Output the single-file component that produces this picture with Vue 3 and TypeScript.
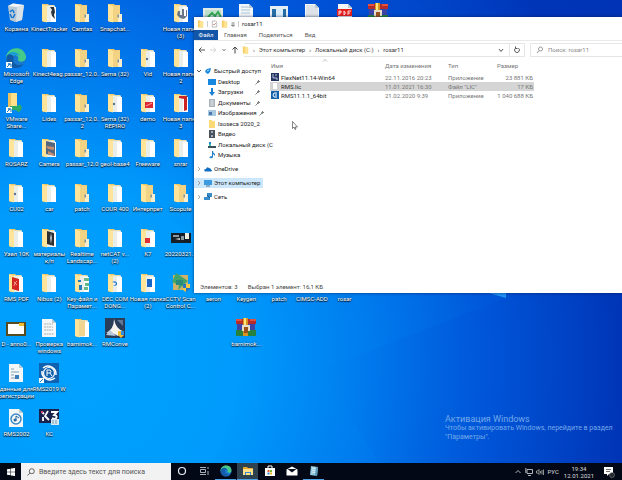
<script setup lang="ts">
import { ref } from 'vue'

interface Shortcut {
  label: string
  icon: string
  col: number
  row: number
}

const grid: [string, string][][] = [
  [
    ['Корзина', 'bin'], ['KinectTracker', 'f-dark'], ['Camtas', 'f-zip'], ['Snapchat...', 'f-zip'], ['', ''],
    ['Новая папка\n(3)', 'f-hand'], ['', 'picture'], ['', 'doc'], ['', 'window'], ['', 'docgray'],
    ['', 'pdf'], ['', 'rar'],
  ],
  [
    ['Microsoft\nEdge', 'edge'], ['Kinect4eag..', 'f-white'], ['passar_12.0..', 'f-zip'], ['Serna (32)', 'f-zip'],
    ['Vid', 'f-dot'], ['Новая папка\n2', 'f-white'],
  ],
  [
    ['VMware\nShare...', 'share'], ['Lides', 'f-white'], ['passar_12.0..\n2', 'f-zip'], ['Serna (32)\nREPIRO', 'f-dot'],
    ['demo', 'f-redbox'], ['Новая папка\n3', 'f-redside'],
  ],
  [
    ['ROSARZ', 'f-white'], ['Camera', 'f-photo'], ['passar_12.0', 'f-zip'], ['geol-base4', 'f-white'],
    ['Freeware', 'f-white'], ['snrar', 'f-white'],
  ],
  [
    ['CU02', 'f-dot'], ['car', 'f-white'], ['patch', 'f-zip'], ['COUR 400', 'f-white'], ['Интерпрет', 'f-zip'],
    ['Scopute', 'f-zip'],
  ],
  [
    ['Узел 10К', 'f-white'], ['материалы\nк/п', 'f-dark2'], ['Realtime\nLandscap...', 'f-zip'],
    ['netCAT v...\n(2)', 'f-white'], ['K7', 'f-redsmall'], ['20220321...', 'video'],
  ],
  [
    ['RMS PDF', 'f-red'], ['Nibus (2)', 'f-white'], ['Key-файл и\nПарамет...', 'f-green'], ['DEC COM\nDONG...', 'f-blue'],
    ['Новая папка\n(2)', 'f-bluebox'], ['CCTV Scan\nControl C...', 'control'], ['aeron', 'f-white'],
    ['Keygen', 'f-zip'], ['patch', 'f-zip'], ['CIMSC-ADD', 'f-white'], ['rosar', 'f-white'],
  ],
  [
    ['D - anno0...', 'screen'], ['Проверка\nwindows', 'textdoc'], ['barnimok...', 'f-half'], ['RMConve', 'tool'],
    ['', ''], ['', ''], ['', ''], ['barnimok...', 'rar'],
  ],
  [['данные для\nрегистрации', 'sheet'], ['RMS2019 W', 'rapp']],
  [['RMS2002', 'disc'], ['KC', 'kc']],
]

const shortcuts: Shortcut[] = grid.flatMap((cells, r) =>
  cells
    .map(([label, icon], c) => ({ label, icon, col: c + 1, row: r + 1 }))
    .filter((s) => s.icon !== ''),
)

const places = [
  { name: 'Desktop', icon: 'desktop', pin: true },
  { name: 'Загрузки', icon: 'down', pin: true },
  { name: 'Документы', icon: 'docs', pin: true },
  { name: 'Изображения', icon: 'pics', pin: true },
  { name: 'Isoseca 2020_2', icon: 'folder', pin: false },
  { name: 'Видео', icon: 'film', pin: false },
  { name: 'Локальный диск (C', icon: 'drive', pin: false },
  { name: 'Музыка', icon: 'music', pin: false },
]

const files = [
  { name: 'FlexNet11.14-Win64', icon: 'flex', date: '22.11.2016 20:23', type: 'Приложение', size: '23 881 КБ' },
  { name: 'RMS.lic', icon: 'blank', date: '11.01.2021 16:30', type: 'Файл "LIC"', size: '17 КБ' },
  { name: 'RMS11.1.1_64bit', icon: 'rms', date: '21.02.2020 9:39', type: 'Приложение', size: '1 040 688 КБ' },
]

const tabs = ['Главная', 'Поделиться', 'Вид']
const selected = ref('RMS.lic')
const fileQuery = ref('')
const taskQuery = ref('')
</script>

<template>
  <div class="screen">
    <main class="desktop">
      <svg class="rays" viewBox="0 0 622 463" preserveAspectRatio="none" aria-hidden="true">
        <defs>
          <linearGradient id="ray" x1="0" x2="1" y1="0" y2="0">
            <stop offset="0" stop-color="#0047cf" stop-opacity="0" />
            <stop offset=".6" stop-color="#0047cf" stop-opacity=".2" />
            <stop offset="1" stop-color="#0038b8" stop-opacity=".1" />
          </linearGradient>
        </defs>
        <path d="M622 262 506 298 320 370 380 463H622Z" fill="url(#ray)" />
        <path d="M478 290h28v8Z" fill="#2da8ff" opacity=".75" />
      </svg>

      <div class="shortcuts">
        <button
          v-for="s in shortcuts"
          :key="s.row + '-' + s.col"
          class="shortcut"
          type="button"
          :style="{ gridColumn: s.col, gridRow: s.row }"
        >
          <svg class="big" viewBox="0 0 20 20" aria-hidden="true">
            <g v-if="s.icon.startsWith('f-')">
              <path d="M3 1h6l1 1h5v17H5l-2-1Z" fill="#eec765" />
              <path v-if="s.icon !== 'f-zip'" d="M7 2.500h9v16.500H7Z" fill="#e9eeea" />
              <path v-if="s.icon !== 'f-zip'" d="M12 4h5v15h-5Z" fill="#fff" />
              <path v-else d="M8 2.500h7v9l2 1v6.500H8Z" fill="#f2d383" />
              <path v-if="s.icon === 'f-zip'" d="M13 11h4v8h-4Z" fill="#f8edcc" />
              <path d="M3 1 8 3V19.500L3 18Z" fill="#ffe49a" />
              <path v-if="s.icon === 'f-zip'" d="M12.500 11.500h1.500v3h-1.500Z" fill="#7891a0" />
              <circle v-if="s.icon === 'f-dot'" cx="9" cy="11" r="1.200" fill="#59739a" />
              <path v-if="s.icon === 'f-dark'" d="M11 4h4l1 5-1 3 1 4-3-3-1-4 1-2Z" fill="#28343c" />
              <path v-if="s.icon === 'f-hand'" d="M7 8h2v4h2V6h2v7h2V7h1v6l-3 3-4-1-3-3Z" fill="#6a7786" />
              <path v-if="s.icon === 'f-dark2'" d="M8 3 15 5v13l-7-2Z" fill="#2d3032" />
              <path v-if="s.icon === 'f-dark2'" d="m12 5 1 5-1 6-1-6Z" fill="#b7c4cb" />
              <path v-if="s.icon === 'f-photo'" d="M7 3 16 5v13l-9-2Z" fill="#52677d" />
              <path v-if="s.icon === 'f-photo'" d="m7 8 8 1v3l-6-1ZM9 13l6 3v2l-6-2Z" fill="#c78d72" />
              <path v-if="s.icon === 'f-redbox'" d="M7 9h8v6H7Z" fill="#dc2932" />
              <path v-if="s.icon === 'f-redbox'" d="m8 13 6-3" stroke="#f9a7a7" />
              <path v-if="s.icon === 'f-redside'" d="M8 3h8v14l-3 1V6L8 5Z" fill="#cb2425" />
              <path v-if="s.icon === 'f-redsmall'" d="M7 10h5v5H7Z" fill="#df3035" />
              <path v-if="s.icon === 'f-red'" d="m6 4 7 2v12l-7-2Z" fill="#d5271f" />
              <path v-if="s.icon === 'f-red'" d="M8 13q1-4 3-5M8 9l3 3" stroke="#fbd1c9" stroke-width=".7" fill="none" />
              <path v-if="s.icon === 'f-green'" d="M12 5h5v3h-5ZM13 10h4v3h-4ZM12 14h4v3h-4Z" fill="#63b98b" />
              <path v-if="s.icon === 'f-green'" d="M6 7h3v2H6Zm1 5h3v5H7Z" fill="#257bbb" />
              <path v-if="s.icon === 'f-blue'" d="M7 9q4-2 5 1t-4 3q3-1 3-3Z" fill="#2576c9" />
              <path v-if="s.icon === 'f-bluebox'" d="M9 6h5v8H9Z" fill="#1766c5" />
              <path v-if="s.icon === 'f-half'" d="M7 3h6v15H7Z" fill="#efd590" />
            </g>
            <g v-else-if="s.icon === 'bin'">
              <path d="M2 3 7 .5 18 2l-2 15-7 2-5-2Z" fill="#b9c8d5" />
              <path d="M2 3 7 .5 18 2l-7 2Z" fill="#f3f5f7" />
              <path d="M11 4 18 2l-2 15-6 2Z" fill="#dae1e7" />
              <path d="M4 9q3-4 4 1M9 11l-2 4M6 15l-2-4" fill="none" stroke="#1678d1" stroke-width="1.600" />
            </g>
            <g v-else-if="s.icon === 'edge'">
              <circle cx="10" cy="10" r="10" fill="#1679cf" />
              <path d="M0 9C1-1 17-4 20 8c1 6-7 7-8 4 2-5-5-7-12-3Z" fill="#46ca89" />
              <path d="M0 10C3 2 11 3 14 8c-6-3-9 2-7 6s8 5 11 2c-4 5-15 6-18-6Z" fill="#1a9dd3" />
              <path d="M8 9c-3 6 3 10 10 7-8 9-20 2-17-8 1-2 4-3 7 1Z" fill="#135aa5" />
              <path d="M0 14h6v6H0Z" fill="#fff" /><path d="m1 19 3-3H2h3v3" stroke="#1479c7" fill="none" />
            </g>
            <g v-else-if="s.icon === 'share'">
              <path d="M2 0h8v14H2Z" fill="#eac15e" /><path d="M5 0h6v14H5Z" fill="#ffe18b" />
              <path d="M4 15h8l3-2M10 14l4 4" stroke="#2dac68" stroke-width="4" fill="none" />
              <path d="M0 14h6v6H0Z" fill="#fff" /><path d="m1 19 3-3H2h3v3" stroke="#1479c7" fill="none" />
            </g>
            <g v-else-if="s.icon === 'rar'">
              <path d="M0 1h20v5H0Z" fill="#b52a2b" /><path d="M1 6h18v6H1Z" fill="#3c44a5" />
              <path d="M0 12h20v6H0Z" fill="#27813f" /><path d="M0 1h6v2H0Zm14 0h6v2h-6Z" fill="#e6513b" />
              <path d="M7 0h5v18H7Z" fill="#d99321" /><path d="M8 0h2v7H8Z" fill="#ffe57a" />
              <path d="M6 7h8v6H6Z" fill="#e6ddca" /><path d="M8 9h4v6H8Z" fill="#9a521d" />
            </g>
            <g v-else-if="s.icon === 'picture'">
              <path d="M0 5h20v13H0Z" fill="#dfe9e6" /><path d="M2 7h16v9H2Z" fill="#bedfcb" />
              <path d="m5 14 4-4 3 3 3-4 3 5" fill="none" stroke="#36a854" stroke-width="2" />
            </g>
            <g v-else-if="s.icon === 'window'">
              <path d="M1 3h18v15H1Z" fill="#e5eef3" /><path d="M3 6h14v12H3Z" fill="#266fa6" />
              <path d="M7 6h7v8H7Z" fill="#d9eefa" />
            </g>
            <g v-else-if="s.icon === 'video'">
              <path d="M0 5h20v10H0Z" fill="#161f27" /><path d="M2 7h6v2H2Zm8 1h3v4h-3Z" fill="#8c9a9f" />
              <path d="M14 5h4v6h-4Z" fill="#f0ede1" /><path d="m4 11 5-1v2Z" fill="#d9d8cd" />
            </g>
            <g v-else-if="s.icon === 'control'">
              <path d="M2 2h15v15H2Z" fill="#ceb269" /><path d="m5 0 12 8-10 9 1-5-7-3Z" fill="#42a46b" />
              <path d="M5 7h7v5H5Z" fill="#2a8b7c" /><path d="M12 11h7v5l-4 3-3-3Z" fill="#2475c5" />
              <path d="M15 11h4v4h-4Zm-3 4h3v4l-3-2Z" fill="#f4c842" />
            </g>
            <g v-else-if="s.icon === 'screen'">
              <path d="M0 4h20v14H0Z" fill="#574b20" /><path d="M2 6h16v10H2Z" fill="#fff" />
              <path d="M13 5h5v3h-5Z" fill="#f3bd2f" />
            </g>
            <g v-else-if="s.icon === 'tool'">
              <path d="M0 0h20v20H0Z" fill="#293d58" /><path d="M9 1q2 10 9 12l-5 5Q6 14 1 15q8-4 8-14Z" fill="#f5f4ed" />
              <path d="m1 17 4-5 6 6Z" fill="#b9cae0" /><path d="M13 13h6v4l-3 3-3-3Z" fill="#f1bb32" />
              <path d="M16 13h3v4h-3Z" fill="#2e8ce1" /><path d="M12 2h6v6Z" fill="#617897" />
            </g>
            <g v-else-if="s.icon === 'rapp'">
              <path d="M0 0h20v20H0Z" fill="#1061af" /><path d="M4 5a8 8 0 0 1 13 7M16 15A8 8 0 0 1 3 8" stroke="#fff" stroke-width="1.500" fill="none" />
              <circle cx="10" cy="10" r="5.500" fill="none" stroke="#fff" stroke-width="1.200" />
              <path d="M8 13V7h3q2 1 0 3H8m3 0 2 3" stroke="#fff" fill="none" />
              <path d="M0 15h5v5H0Z" fill="#fff" /><path d="m1 19 3-3" stroke="#1479c7" />
            </g>
            <g v-else-if="s.icon === 'kc'">
              <path d="M0 1h20v14H0Z" fill="#17224c" />
              <path d="m3 4 2 2m4-3L6 8l4 4M4 9v4M12 4h6l-3 3q5 1 1 4l-3-1" stroke="#fff" stroke-width="1.800" fill="none" />
              <path d="M2 3h2v2H2Z" fill="#e24b70" /><path d="M12 11h8v6h-8Z" fill="#d6e8f1" /><path d="M14 12v4m3-4v4" stroke="#7996ad" />
            </g>
            <g v-else>
              <path d="M3 1h10l4 4v14H3Z" fill="#f4f7f8" /><path d="M13 1v4h4Z" fill="#bdc9d0" />
              <path v-if="s.icon === 'docgray'" d="M4 2h9v3h3v13H4Z" fill="#dce2e5" />
              <path v-if="s.icon === 'doc'" d="M5 4h8M5 7h9M5 10h9" stroke="#a5c5da" />
              <path v-if="s.icon === 'pdf'" d="M2 6h15v7H2Z" fill="#e4201e" />
              <path v-if="s.icon === 'pdf'" d="M4 12V8h2v2H4m5-2v4m0-4q3 2 0 4m4 0V8h3m-3 2h2" fill="none" stroke="#fff" stroke-width=".8" />
              <path v-if="s.icon === 'textdoc'" d="M5 6h9M5 9h9M5 12h9M5 16h10" stroke="#a5b0b4" stroke-dasharray="2 .6" />
              <path v-if="s.icon === 'sheet'" d="M5 6h3m-3 3h8M5 12h3m-3 3h8" stroke="#84a3bc" />
              <path v-if="s.icon === 'sheet'" d="M9 12h4v4H9Z" fill="#397ebb" />
              <circle v-if="s.icon === 'disc'" cx="10" cy="11" r="5" fill="none" stroke="#398ac5" stroke-width="1.500" />
              <path v-if="s.icon === 'disc'" d="M10 13V8l3 2" stroke="#23689f" fill="none" />
              <circle v-if="s.icon === 'disc'" cx="9" cy="12" r="1.500" fill="#23689f" />
            </g>
          </svg>
          <span>{{ s.label }}</span>
        </button>
      </div>

      <p class="activation">
        <strong>Активация Windows</strong>
        Чтобы активировать Windows, перейдите в раздел<br />"Параметры".
      </p>

      <section class="explorer" aria-label="rosar11">
        <header class="titlebar">
          <svg class="tiny" viewBox="0 0 8 8"><path d="M1 0h3v1h3v7H1Z" fill="#f6cd65" /><path d="M3 1h4v7H3Z" fill="#ffe391" /></svg>
          <i class="sep"></i>
          <svg class="tiny" viewBox="0 0 8 8"><path d="M1.500.5h4l1 1v6h-5Z" fill="#fff" stroke="#999" stroke-width=".7" /><path d="m2.500 4 1 1 2-2" stroke="#b45849" fill="none" stroke-width=".8" /></svg>
          <svg class="tiny" viewBox="0 0 8 8"><path d="M1 0h3v1h3v7H1Z" fill="#f6cd65" /><path d="M3 1h4v7H3Z" fill="#ffe391" /></svg>
          <svg class="caret" viewBox="0 0 4 8"><path d="M.5 3h3M.5 5h3L2 6.500Z" stroke="#444" stroke-width=".7" /></svg>
          <i class="sep"></i>
          <span>rosar11</span>
        </header>
        <div class="ribbon">
          <button class="file" type="button">Файл</button>
          <button v-for="t in tabs" :key="t" type="button">{{ t }}</button>
        </div>
        <div class="toolbar">
          <div class="arrows">
            <button type="button" aria-label="Назад"><svg viewBox="0 0 8 8"><path d="M7 4H1m2.500-2.500L1 4l2.500 2.500" stroke="#555" /></svg></button>
            <button type="button" aria-label="Вперед"><svg viewBox="0 0 8 8"><path d="M1 4h6M4.500 1.500 7 4 4.500 6.500" stroke="#d5d5d5" /></svg></button>
            <button type="button" aria-label="Последние"><svg viewBox="0 0 8 8"><path d="m2.500 3 1.500 2 1.500-2" stroke="#888" /></svg></button>
            <button type="button" aria-label="Вверх"><svg viewBox="0 0 8 8"><path d="M4 7.500V1M1.500 3.500 4 1l2.500 2.500" stroke="#444" /></svg></button>
          </div>
          <nav class="address" aria-label="Адрес">
            <svg class="tiny" viewBox="0 0 8 8"><path d="M1 0h3v1h3v7H1Z" fill="#f6cd65" /><path d="M3 1h4v7H3Z" fill="#ffe391" /></svg>
            <b>›</b><a href="#">Этот компьютер</a><b>›</b><a href="#">Локальный диск (C:)</a><b>›</b><a href="#">rosar11</a>
            <button class="push" type="button" aria-label="Список"><svg viewBox="0 0 8 8"><path d="m2 3 2 2.500L6 3" stroke="#555" /></svg></button>
            <button class="refresh" type="button" aria-label="Обновить"><svg viewBox="0 0 8 8"><path d="M5.500 2.200a2.400 2.400 0 1 1-3 0M2.500.5v2h2" stroke="#555" /></svg></button>
          </nav>
          <label class="find">
            <svg viewBox="0 0 8 8"><circle cx="4.500" cy="3" r="2" stroke="#999" /><path d="M3 4.500 1 7" stroke="#999" /></svg>
            <input v-model="fileQuery" type="text" placeholder="Поиск: rosar11" aria-label="Поиск: rosar11" />
          </label>
        </div>

        <div class="body">
          <aside>
            <ul class="quick">
              <li class="root">
                <svg class="chev" viewBox="0 0 6 6"><path d="m1 2 2 2 2-2" stroke="#555" /></svg>
                <svg class="glyph" viewBox="0 0 8 8"><path d="m1 4 2-2 4-1-1 4-2 2-2-1Z" fill="#1688e0" /><path d="m3 4 2-1" stroke="#b9e2ff" /></svg>
                Быстрый доступ
              </li>
              <li v-for="p in places" :key="p.name" class="place">
                <svg class="glyph" viewBox="0 0 8 8" aria-hidden="true">
                  <path v-if="p.icon === 'desktop'" d="M0 1h8v6H0Z" fill="#1688e0" />
                  <path v-else-if="p.icon === 'down'" d="M3 0h2v4h2L4 8 1 4h2Z" fill="#1c7fd0" />
                  <g v-else-if="p.icon === 'docs'"><path d="M1 0h6v8H1Z" fill="#a9b4bb" /><path d="M2.500 2h3m-3 2h3m-3 2h3" stroke="#fff" stroke-width=".8" /></g>
                  <g v-else-if="p.icon === 'pics'"><path d="M0 1h8v6H0Z" fill="#a8c9e2" /><path d="M1 3h3v3H1Z" fill="#4778a7" /></g>
                  <path v-else-if="p.icon === 'folder'" d="M1 0h3v1h3v7H1Z" fill="#fbd978" />
                  <g v-else-if="p.icon === 'film'"><path d="M1 0h6v8H1Z" fill="#4a535d" /><path d="M3 1h2v2H3Zm0 4h2v2H3Z" fill="#9eacb7" /></g>
                  <g v-else-if="p.icon === 'drive'"><path d="M1 1h2v2H1Z" fill="#1c88d2" /><path d="M0 5h8v2H0Z" fill="#38505a" /><path d="M1 3h2v2H1Z" fill="#48bda4" /></g>
                  <path v-else d="M4 0h1q0 2 2 3v2L5 3v3Q4 8 2 7T4 5Z" fill="#2380cc" />
                </svg>
                <span>{{ p.name }}</span>
                <svg v-if="p.pin" class="pin" viewBox="0 0 6 6"><path d="m3 1 2 2M4 2 2 3l1 1 1-2M2.500 3.500.5 5.500" stroke="#666" stroke-width=".8" /></svg>
              </li>
            </ul>
            <ul class="roots">
              <li class="root">
                <svg class="chev" viewBox="0 0 6 6"><path d="m2 1 2 2-2 2" stroke="#aaa" /></svg>
                <svg class="glyph" viewBox="0 0 8 8"><path d="M1 6.500Q-1 4 2 4q1-3 3-1 2 0 2 1.500 2 1 0 2Z" fill="#0f6fc2" /></svg>
                OneDrive
              </li>
              <li class="root current">
                <svg class="chev" viewBox="0 0 6 6"><path d="m2 1 2 2-2 2" stroke="#999" /></svg>
                <svg class="glyph" viewBox="0 0 8 8"><path d="M0 1h8v5H0Z" fill="#3b9be0" /><path d="M2 7h4" stroke="#47758f" /></svg>
                Этот компьютер
              </li>
              <li class="root">
                <svg class="chev" viewBox="0 0 6 6"><path d="m2 1 2 2-2 2" stroke="#aaa" /></svg>
                <svg class="glyph" viewBox="0 0 8 8"><path d="M3 0h5v4H6v3H0V4h3Z" fill="#3a8cc9" /><path d="M3 2 6 5" stroke="#155b94" /></svg>
                Сеть
              </li>
            </ul>
          </aside>
          <div class="list">
            <table>
              <colgroup><col class="c-name" /><col class="c-date" /><col class="c-type" /><col class="c-size" /></colgroup>
              <thead>
                <tr><th>Имя<svg class="sort" viewBox="0 0 6 3"><path d="m1 2.500 2-2 2 2" stroke="#999" stroke-width=".7" /></svg></th><th>Дата изменения</th><th>Тип</th><th>Размер</th></tr>
              </thead>
              <tbody>
                <tr v-for="f in files" :key="f.name" :class="{ on: f.name === selected }" @click="selected = f.name">
                  <td>
                    <svg class="glyph" viewBox="0 0 8 8" aria-hidden="true">
                      <g v-if="f.icon === 'flex'"><path d="M0 0h8v8H0Z" fill="#24365f" /><path d="M2 1v4h4v2M4 2h2" stroke="#b6c5e6" /></g>
                      <path v-else-if="f.icon === 'blank'" d="M1.500.5h4l1 1v6h-5Z" fill="#fff" stroke="#bbb" stroke-width=".5" />
                      <g v-else><path d="M0 0h8v8H0Z" fill="#1261ad" /><path d="M6 2Q2 1 2 4t4 2M4 4h2" stroke="#fff" /></g>
                    </svg>{{ f.name }}
                  </td>
                  <td>{{ f.date }}</td>
                  <td>{{ f.type }}</td>
                  <td>{{ f.size }}</td>
                </tr>
              </tbody>
            </table>
          </div>
        </div>
        <footer class="status"><span>Элементов: 3</span><span>Выбран 1 элемент: 16,1 КБ</span></footer>
      </section>

      <svg class="cursor" viewBox="0 0 6 9" aria-hidden="true"><path d="M.5.5v7L2 6l1 2.500 1-.5-1-2h2.500Z" fill="#fff" stroke="#333" stroke-width=".6" /></svg>
    </main>

    <footer class="taskbar">
      <button class="start" type="button" aria-label="Пуск">
        <svg viewBox="0 0 8 8"><path d="M0 1.200 3.500.7v3H0ZM4 .6 8 0v3.700H4ZM0 4.200h3.500v3L0 6.700Zm4 0h4V8l-4-.6Z" fill="#fff" /></svg>
      </button>
      <label class="search">
        <svg viewBox="0 0 8 8"><circle cx="4.800" cy="3.200" r="2.500" stroke="#444" stroke-width=".8" /><path d="m3 5-2.500 2.500" stroke="#444" stroke-width=".8" /></svg>
        <input v-model="taskQuery" type="text" placeholder="Введите здесь текст для поиска" aria-label="Поиск" />
      </label>
      <div class="apps">
        <button type="button" aria-label="Cortana"><svg viewBox="0 0 12 12"><circle cx="6" cy="6" r="3.500" stroke="#e8edf2" stroke-width="1.200" /></svg></button>
        <button type="button" aria-label="Представление задач"><svg viewBox="0 0 12 12"><path d="M2 2.500h6M2 9.500h6M2.500 4.500h5v3h-5ZM10 2v2m0 2v4" stroke="#bac2c9" stroke-width=".9" /></svg></button>
        <button class="open" type="button" aria-label="Microsoft Edge">
          <svg viewBox="0 0 12 12"><circle cx="6" cy="6" r="5.500" fill="#1679cf" /><path d="M.5 6C1-1 11-1 11.500 5c0 4-5 3-4 1 1-3-4-4-7 0Z" fill="#48ca88" /><path d="M.5 6c1-4 5-4 6-2-3 1-2 6 3 5-4 5-9 1-9-3Z" fill="#155ca9" /></svg>
        </button>
        <button class="open active" type="button" aria-label="Проводник">
          <svg viewBox="0 0 12 12"><path d="M1 2h4l1 1h5v7H1Z" fill="#e8aa2e" /><path d="M1 4h10v6H1Z" fill="#ffe08a" /><path d="M3 7h6v3H8V8H4v2H3Z" fill="#398bc8" /></svg>
        </button>
        <button type="button" aria-label="Store">
          <svg viewBox="0 0 12 12"><path d="M4 4V1h4v3" stroke="#fff" /><path d="M1 3h10v8H1Z" fill="#fff" /><path d="M3.500 5h2v2h-2Z" fill="#e4572e" /><path d="M6 5h2v2H6Z" fill="#76b82a" /><path d="M3.500 7.500h2v2h-2Z" fill="#2589d0" /><path d="M6 7.500h2v2H6Z" fill="#f0b323" /></svg>
        </button>
        <button type="button" aria-label="Почта"><svg viewBox="0 0 12 12"><path d="m.5 4.500 5.500-3 5.500 3v6H.5Z" fill="#fff" /><path d="m1.500 4 4.500 3.500L10.500 4Z" fill="#0a1020" /></svg></button>
        <button class="open" type="button" aria-label="Блокнот"><svg viewBox="0 0 12 12"><path d="m3 1 7 1-1 9-7-1Z" fill="#8fc8df" /><path d="m4 3 5 .5M4 5l4 .5M3.500 7l4 .5" stroke="#f3fbff" stroke-width=".8" /><path d="m8 2 2 .3L9 11l-2-.3Z" fill="#5899b8" /></svg></button>
      </div>
      <div class="tray">
        <svg viewBox="0 0 8 8"><path d="m1.500 5 2.500-2.500L6.500 5" stroke="#ddd" stroke-width=".8" /></svg>
        <svg viewBox="0 0 8 8"><path d="M2 1.500h5.500v4H2ZM.8 0v5M3 7.500h3" stroke="#ddd" stroke-width=".8" /></svg>
        <svg viewBox="0 0 8 8"><path d="M.5 3h1L3 1.500v5L1.500 5h-1ZM4.500 3v2.500M6 2v4.500M7.500 1.500v5.500" stroke="#ccc" stroke-width=".7" /></svg>
        <span>РУС</span>
        <time><span>19:34</span><span>12.01.2021</span></time>
        <button type="button" aria-label="Уведомления"><svg viewBox="0 0 12 12"><path d="M1 1h9v7H6L4 10V8H1Z" fill="#fff" /><path d="M3 3.500h5M3 5.500h4" stroke="#333" stroke-width=".7" /><circle cx="9" cy="9" r="2.600" fill="#25292f" stroke="#aaa" stroke-width=".4" /></svg></button>
      </div>
    </footer>
  </div>
</template>

<style>
body {
  margin: 0;
}
</style>

<style scoped>
.screen {
  display: flex;
  flex-direction: column;
  min-height: 100vh;
  overflow: hidden;
  font: 6px/8px Roboto, "Noto Sans", sans-serif;
}
button,
input {
  margin: 0;
  padding: 0;
  border: 0;
  background: none;
  font: inherit;
  color: inherit;
}
svg {
  display: block;
  flex: none;
  fill: none;
}
a {
  color: inherit;
  text-decoration: none;
}
ul {
  margin: 0;
  padding: 0;
  list-style: none;
}
.desktop {
  position: relative;
  flex: 1;
  overflow: hidden;
  background:
    radial-gradient(ellipse 60% 50% at 60% 0%, rgba(0, 70, 205, 0.4), transparent),
    radial-gradient(ellipse 90% 130% at 13% 78%, #00a2ff 0%, #009bfc 28%, #007bee 52%, #0056d8 74%, #0030b2 100%);
}
.rays {
  position: absolute;
  inset: 0;
  width: 100%;
  height: 100%;
}
.shortcuts {
  position: relative;
  display: grid;
  grid-template-columns: repeat(12, 1fr);
  grid-auto-rows: 45px;
  width: 394px;
  padding-top: 3px;
}
.shortcut {
  display: flex;
  flex-direction: column;
  align-items: center;
  gap: 2px;
  min-width: 0;
  color: #fff;
  line-height: 7px;
  text-shadow: 0 1px 1px #000, 0 0 2px #012a52;
  white-space: pre;
}
.big {
  width: 20px;
  height: 20px;
}
.activation {
  position: absolute;
  right: 20px;
  bottom: 21px;
  width: 157px;
  margin: 0;
  color: #74a9ea;
  font-size: 7px;
  line-height: 9px;
  white-space: nowrap;
}
.activation strong {
  display: block;
  font-size: 9px;
  font-weight: 400;
  line-height: 10px;
}
.explorer {
  position: absolute;
  top: 17px;
  right: 0;
  left: 194px;
  display: flex;
  flex-direction: column;
  height: 276px;
  overflow: hidden;
  background: #fff;
  color: #222;
  box-shadow: 0 0 3px rgba(0, 20, 70, 0.7);
}
.titlebar {
  display: flex;
  align-items: center;
  gap: 3px;
  height: 13px;
  padding-left: 3px;
}
.tiny {
  width: 7px;
  height: 8px;
}
.caret {
  width: 4px;
  height: 8px;
}
.sep {
  width: 1px;
  height: 6px;
  background: #ccc;
}
.ribbon {
  display: flex;
  gap: 12px;
  height: 10px;
  border-bottom: 1px solid #e9e9e9;
  color: #555;
}
.ribbon .file {
  width: 24px;
  margin-right: -6px;
  background: #1356a8;
  color: #fff;
}
.toolbar {
  display: flex;
  align-items: center;
  gap: 5px;
  height: 18px;
  padding-left: 4px;
}
.toolbar button svg,
.find svg {
  width: 8px;
  height: 8px;
}
.arrows {
  display: flex;
  gap: 3px;
}
.address {
  display: flex;
  flex: 1;
  align-items: center;
  gap: 4px;
  height: 12px;
  border: 1px solid #e6e6e6;
  border-left: 0;
  color: #333;
  white-space: nowrap;
}
.address .tiny {
  margin-left: -2px;
}
.address b {
  font-weight: 400;
}
.push {
  margin-left: auto;
}
.refresh {
  display: flex;
  align-items: center;
  height: 12px;
  padding: 0 3px;
  border-left: 1px solid #e6e6e6;
}
.find {
  display: flex;
  flex: none;
  align-items: center;
  gap: 4px;
  width: 92px;
  height: 14px;
  padding-left: 5px;
  border: 1px solid #e6e6e6;
  border-right: 0;
  box-sizing: border-box;
}
.find input {
  flex: 1;
  min-width: 0;
}
.find input::placeholder {
  color: #888;
  opacity: 1;
}
.body {
  display: flex;
  flex: 1;
}
aside {
  width: 72px;
  padding-top: 7px;
}
.quick {
  display: flex;
  flex-direction: column;
  justify-content: space-between;
  height: 94px;
}
.root,
.place {
  display: flex;
  align-items: center;
  gap: 2px;
  height: 10px;
  padding-left: 2px;
  white-space: nowrap;
}
.place {
  padding-left: 14px;
}
.roots {
  display: flex;
  flex-direction: column;
  gap: 4px;
  padding-top: 4px;
}
.roots,
.quick {
  margin-right: 3px;
}
.current {
  background: #cce6fb;
}
.chev,
.pin {
  width: 6px;
  height: 6px;
}
.pin {
  margin: 0 2px 0 auto;
}
.glyph {
  width: 8px;
  height: 8px;
}
.list {
  flex: 1;
  padding: 0 0 0 4px;
}
table {
  width: 264px;
  border-collapse: collapse;
  table-layout: fixed;
  color: #777;
}
.c-name {
  width: 114px;
}
.c-date {
  width: 63px;
}
.c-type {
  width: 49px;
}
.c-size {
  width: 38px;
}
th,
td {
  height: 9px;
  padding: 0 1px;
  font-weight: 400;
  line-height: 9px;
  text-align: left;
  white-space: nowrap;
}
th {
  position: relative;
  height: 13px;
  padding-bottom: 1px;
  color: #777;
}
.sort {
  position: absolute;
  top: 0;
  left: 52px;
  width: 6px;
  height: 3px;
}
td:first-child {
  color: #222;
}
td .glyph {
  display: inline-block;
  margin-right: 2px;
  vertical-align: top;
}
td:last-child {
  text-align: right;
}
.on {
  background: #d5d5d5;
}
.status {
  display: flex;
  gap: 10px;
  height: 9px;
  padding: 0 0 1px 6px;
  color: #444;
}
.cursor {
  position: absolute;
  top: 121px;
  left: 292px;
  width: 6px;
  height: 9px;
}
.taskbar {
  display: flex;
  height: 17px;
  background: #030816;
  color: #ddd;
}
.start {
  display: flex;
  align-items: center;
  justify-content: center;
  width: 21px;
}
.start svg {
  width: 8px;
  height: 8px;
}
.search {
  display: flex;
  align-items: center;
  gap: 4px;
  width: 144px;
  padding-left: 6px;
  background: #f2f2f2;
  font-size: 7px;
}
.search svg {
  width: 8px;
  height: 8px;
}
.search input {
  flex: 1;
  min-width: 0;
}
.search input::placeholder {
  color: #555;
  opacity: 1;
}
.apps {
  display: flex;
}
.apps button {
  display: flex;
  align-items: center;
  justify-content: center;
  width: 21px;
  margin-right: 1px;
  border-bottom: 1px solid transparent;
}
.apps svg,
.tray button svg {
  width: 12px;
  height: 12px;
}
.apps .open {
  border-bottom-color: #4aa3e8;
}
.apps .active {
  background: #2f4250;
}
.tray {
  display: flex;
  align-items: center;
  gap: 3px;
  margin-left: auto;
  padding-right: 7px;
}
.tray svg {
  width: 8px;
  height: 8px;
}
time {
  display: flex;
  flex-direction: column;
  align-items: center;
  margin: 0 6px 0 2px;
  line-height: 7px;
}
</style>
